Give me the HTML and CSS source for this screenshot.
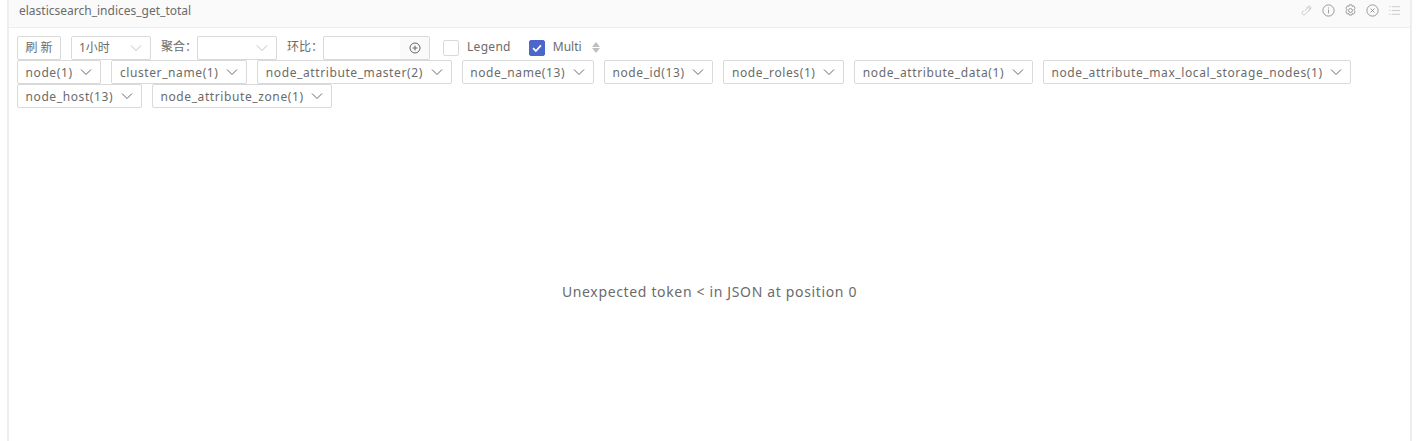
FILE: index.html
```html
<!DOCTYPE html>
<html>
  <head>
    <title>elasticsearch_indices_get_total</title>
    <link rel="stylesheet" href="styles.css">
  </head>
  <body>
    <div class="panel">
      <div class="panel-header">
        <span class="panel-title">elasticsearch_indices_get_total</span>
        <div class="panel-tools">
          <svg class="tool tool-light" viewBox="0 0 12 12"><path d="M3.900 5.800L2.200 7.500a1.700 1.700 0 0 0 2.300 2.300L8.900 5.400a1.200 1.200 0 0 0-1.700-1.700L4.800 6.100M8.100 6.200l1.700-1.700a1.700 1.700 0 0 0-2.300-2.300L5.900 3.800"/></svg>
          <svg class="tool" viewBox="0 0 12 12"><circle cx="6" cy="6" r="5.200"/><path d="M6 5.200v3.400M6 3.200v1"/></svg>
          <svg class="tool" viewBox="0 0 12 12"><path d="M4.700 .8h2.600l.3 1.500 1.300-.6 1.400 2.300-1 1 0 1 1 1-1.400 2.300-1.300-.6-.3 1.500H4.700l-.3-1.500-1.300.6-1.400-2.300 1-1 0-1-1-1 1.400-2.300 1.300.6z"/><circle cx="6" cy="6" r="1.800"/></svg>
          <svg class="tool" viewBox="0 0 12 12"><circle cx="6" cy="6" r="5.200"/><path d="M4.200 4.200l3.600 3.600M7.800 4.200l-3.600 3.600"/></svg>
          <svg class="tool tool-light" viewBox="0 0 12 12"><path d="M1 2.500h1.200M3.500 2.500h7.500M1 6h1.200M3.500 6h7.500M1 9.500h1.200M3.500 9.500h7.500"/></svg>
        </div>
      </div>
      <div class="panel-body">
        <div class="toolbar">
          <button class="btn btn-refresh">刷 新</button>
          <div class="select select-range">
            <span>1小时</span>
            <svg class="arrow arrow-light" viewBox="0 0 12 8"><path d="M1 1.500l5 5 5-5"/></svg>
          </div>
          <label class="field-label">聚合：</label>
          <div class="select select-agg">
            <svg class="arrow arrow-light" viewBox="0 0 12 8"><path d="M1 1.500l5 5 5-5"/></svg>
          </div>
          <label class="field-label">环比：</label>
          <div class="compare">
            <div class="compare-input"></div>
            <div class="compare-addon">
              <svg class="plus-icon" viewBox="0 0 12 12"><circle cx="6" cy="6" r="5"/><path d="M6 3.500v5M3.500 6h5"/></svg>
            </div>
          </div>
          <span class="checkbox"></span>
          <span class="check-text check-legend">Legend</span>
          <span class="checkbox checkbox-on">
            <svg viewBox="0 0 16 16"><path d="M3.500 8.200l3.200 3.200 5.800-6.400"/></svg>
          </span>
          <span class="check-text">Multi</span>
          <span class="sorter"><i class="sort-up"></i><i class="sort-down"></i></span>
        </div>
        <div class="tags">
          <div class="tag">node(1)<svg class="arrow" viewBox="0 0 12 8"><path d="M1 1.500l5 5 5-5"/></svg></div>
          <div class="tag">cluster_name(1)<svg class="arrow" viewBox="0 0 12 8"><path d="M1 1.500l5 5 5-5"/></svg></div>
          <div class="tag">node_attribute_master(2)<svg class="arrow" viewBox="0 0 12 8"><path d="M1 1.500l5 5 5-5"/></svg></div>
          <div class="tag">node_name(13)<svg class="arrow" viewBox="0 0 12 8"><path d="M1 1.500l5 5 5-5"/></svg></div>
          <div class="tag">node_id(13)<svg class="arrow" viewBox="0 0 12 8"><path d="M1 1.500l5 5 5-5"/></svg></div>
          <div class="tag">node_roles(1)<svg class="arrow" viewBox="0 0 12 8"><path d="M1 1.500l5 5 5-5"/></svg></div>
          <div class="tag">node_attribute_data(1)<svg class="arrow" viewBox="0 0 12 8"><path d="M1 1.500l5 5 5-5"/></svg></div>
          <div class="tag">node_attribute_max_local_storage_nodes(1)<svg class="arrow" viewBox="0 0 12 8"><path d="M1 1.500l5 5 5-5"/></svg></div>
          <div class="tag">node_host(13)<svg class="arrow" viewBox="0 0 12 8"><path d="M1 1.500l5 5 5-5"/></svg></div>
          <div class="tag">node_attribute_zone(1)<svg class="arrow" viewBox="0 0 12 8"><path d="M1 1.500l5 5 5-5"/></svg></div>
        </div>
        <div class="message">Unexpected token &lt; in JSON at position 0</div>
      </div>
    </div>
  </body>
</html>
```

FILE: styles.css
```css
:root {
  --border-color: #d9d9d9;
  --panel-border: #eeeeee;
  --text-primary: #6b6b6b;
  --text-light: #bfbfbf;
  --check-color: #4a67c9;
}

html,
body {
  height: 100%;
}

body {
  margin: 0;
  overflow: hidden;
  background-color: white;
  color: var(--text-primary);
  font-family: "Noto Sans", "Noto Sans CJK SC", sans-serif;
  font-size: 12px;
}

.panel {
  box-sizing: border-box;
  height: 441px;
  margin: 0 10px 0 7px;
  border-left: 2px solid var(--panel-border);
  border-right: 2px solid var(--panel-border);
}

.panel-header {
  display: flex;
  align-items: center;
  justify-content: space-between;
  height: 27px;
  padding: 0 10px;
  background-color: #fafafa;
  border-bottom: 1px solid var(--panel-border);
}

.panel-title {
  margin-bottom: 6px;
  line-height: 16px;
}

.panel-tools {
  display: flex;
  gap: 9px;
  margin-bottom: 6px;
  margin-right: -1px;
}

.tool {
  width: 13px;
  height: 13px;
  fill: none;
  stroke: #8c8c8c;
  stroke-width: 0.8;
}

.tool-light {
  stroke: #c4c4c4;
}

.panel-body {
  position: relative;
  height: 413px;
  padding: 8px 8px 0;
}

.toolbar {
  display: flex;
  align-items: center;
  height: 24px;
  line-height: 22px;
}

.btn {
  box-sizing: border-box;
  height: 24px;
  width: 44px;
  padding: 0 0 1px;
  background-color: white;
  border: 1px solid var(--border-color);
  border-radius: 2px;
  color: var(--text-primary);
  font: inherit;
}

.select {
  box-sizing: border-box;
  display: flex;
  align-items: center;
  justify-content: space-between;
  height: 24px;
  padding: 0 8px 0 7px;
  border: 1px solid var(--border-color);
  border-radius: 2px;
}

.select-range {
  width: 80px;
  margin-left: 10px;
}

.select-agg {
  justify-content: flex-end;
  width: 80px;
}

.field-label {
  width: 36px;
  margin-left: 10px;
  margin-bottom: 2px;
  white-space: nowrap;
}

.compare {
  box-sizing: border-box;
  display: flex;
  width: 107px;
  height: 24px;
  border: 1px solid var(--border-color);
  border-radius: 2px;
}

.compare-input {
  flex: 1;
}

.compare-addon {
  display: flex;
  align-items: center;
  justify-content: center;
  width: 29px;
  background-color: #fafafa;
}

.plus-icon {
  width: 12px;
  height: 12px;
  fill: none;
  stroke: #555555;
  stroke-width: 0.9;
}

.checkbox {
  box-sizing: border-box;
  display: block;
  width: 16px;
  height: 16px;
  margin-left: 13px;
  background-color: white;
  border: 1px solid var(--border-color);
  border-radius: 2px;
}

.checkbox-on {
  margin-left: 18px;
  background-color: var(--check-color);
  border-color: var(--check-color);
}

.checkbox-on svg {
  display: block;
  width: 14px;
  height: 14px;
  fill: none;
  stroke: white;
  stroke-width: 2;
}

.check-text {
  margin-bottom: 2px;
  margin-left: 8px;
}

.check-legend {
  letter-spacing: 0.3px;
}

.sorter {
  display: flex;
  flex-direction: column;
  gap: 1px;
  margin-left: 10px;
  margin-bottom: 1px;
}

.sort-up,
.sort-down {
  display: block;
  width: 0;
  height: 0;
  border-left: 4px solid transparent;
  border-right: 4px solid transparent;
}

.sort-up {
  border-bottom: 5px solid var(--text-light);
}

.sort-down {
  border-top: 5px solid var(--text-light);
}

.tags {
  display: flex;
  flex-wrap: wrap;
  gap: 0 10px;
}

.tag {
  box-sizing: border-box;
  display: flex;
  align-items: center;
  gap: 7.800px;
  height: 24px;
  padding: 0 8px 0 7.500px;
  border: 1px solid var(--border-color);
  border-radius: 2px;
  letter-spacing: 0.6px;
  white-space: nowrap;
}

.arrow {
  flex: none;
  width: 12px;
  height: 8px;
  fill: none;
  stroke: #666666;
  stroke-width: 1;
}

.arrow-light {
  stroke: var(--text-light);
}

.message {
  position: absolute;
  top: 254px;
  left: 0;
  right: 0;
  font-size: 14px;
  letter-spacing: 0.65px;
  line-height: 20px;
  text-align: center;
}
```
